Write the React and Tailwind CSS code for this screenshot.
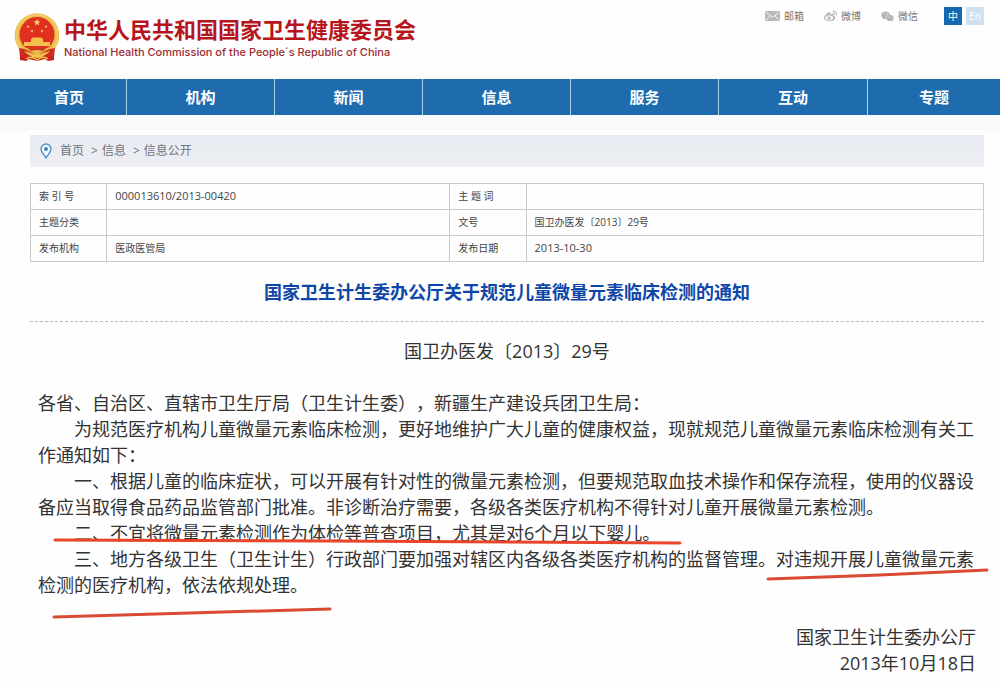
import { FaWeibo, FaWeixin } from "react-icons/fa";

const NAV_ITEMS = ["首页", "机构", "新闻", "信息", "服务", "互动", "专题"];

const CRUMBS = ["首页", "信息", "信息公开"];

const META_ROWS = [
  [
    { label: "索 引 号", value: "000013610/2013-00420", numeric: true },
    { label: "主 题 词", value: "" },
  ],
  [
    { label: "主题分类", value: "" },
    { label: "文号", value: "国卫办医发〔2013〕29号" },
  ],
  [
    { label: "发布机构", value: "医政医管局" },
    { label: "发布日期", value: "2013-10-30", numeric: true },
  ],
];

const PARAGRAPHS = [
  "为规范医疗机构儿童微量元素临床检测，更好地维护广大儿童的健康权益，现就规范儿童微量元素临床检测有关工作通知如下：",
  "一、根据儿童的临床症状，可以开展有针对性的微量元素检测，但要规范取血技术操作和保存流程，使用的仪器设备应当取得食品药品监管部门批准。非诊断治疗需要，各级各类医疗机构不得针对儿童开展微量元素检测。",
  "二、不宜将微量元素检测作为体检等普查项目，尤其是对6个月以下婴儿。",
  "三、地方各级卫生（卫生计生）行政部门要加强对辖区内各级各类医疗机构的监督管理。对违规开展儿童微量元素检测的医疗机构，依法依规处理。",
];

const STAR =
  "M0 -5 L1.2 -1.6 L4.8 -1.5 L1.9 0.6 L2.9 4 L0 2 L-2.9 4 L-1.9 0.6 L-4.8 -1.5 L-1.2 -1.6 Z";

function Emblem() {
  return (
    <svg viewBox="0 0 46 50" className="h-[50px] w-[46px] shrink-0" aria-hidden="true">
      <path d="M6 34 L6 47 L12 48 L15 46 L23 48 L31 46 L34 48 L40 47 L40 34 Z" fill="#c8201c" />
      <circle cx="23" cy="22.5" r="22.3" fill="#ecbc4c" />
      <circle cx="23" cy="22.5" r="20.5" fill="none" stroke="#f3cf6c" strokeWidth="1.5" />
      <circle cx="23" cy="21.5" r="17.5" fill="#e0301f" />
      <path d={STAR} transform="translate(23 9.5) scale(0.75)" fill="#f6d66b" />
      <path d={STAR} transform="translate(14 13.5) scale(0.35)" fill="#f6d66b" />
      <path d={STAR} transform="translate(18 18) scale(0.35)" fill="#f6d66b" />
      <path d={STAR} transform="translate(28 18) scale(0.35)" fill="#f6d66b" />
      <path d={STAR} transform="translate(32 13.5) scale(0.35)" fill="#f6d66b" />
      <path d="M17 26 L19 24.5 H27 L29 26 V29 H36 V33 H10 V29 H17 Z" fill="#f3c04c" />
      <path d="M7 33 Q23 40 39 33 L36 38 Q23 44 10 38 Z" fill="#e9b646" />
      <path d="M14 35 Q19 34 23 36 Q27 34 32 35 L29 38 Q23 36 17 38 Z" fill="#cf3a1e" />
      <path d="M5 35 Q13 36 20 41 L15 46 Q10 43 6 44 Z" fill="#cf2a1e" />
      <path d="M41 35 Q33 36 26 41 L31 46 Q36 43 40 44 Z" fill="#cf2a1e" />
      <path d="M10 38 Q17 39 23 43 Q29 39 36 38 Q32 43 23 45 Q14 43 10 38 Z" fill="#f0bf4a" />
      <path d="M12 46 Q17 42 23 47 Q29 42 34 46" fill="none" stroke="#efbd48" strokeWidth="1.5" />
    </svg>
  );
}

function MailIcon() {
  return (
    <svg viewBox="0 0 15 10" className="h-[10px] w-[15px]" aria-hidden="true">
      <rect width="15" height="10" rx="1" fill="#b9b9b9" />
      <path d="M1 1.5 L7.5 6 L14 1.5 M1 9 L5 5 M14 9 L10 5" fill="none" stroke="#fff" strokeWidth="0.9" />
    </svg>
  );
}

function PinIcon() {
  return (
    <svg viewBox="0 0 12 16" className="h-4 w-3" aria-hidden="true">
      <path
        d="M6 15 C4.5 12 1 9.5 1 6 A5 5 0 0 1 11 6 C11 9.5 7.5 12 6 15 Z"
        fill="#f5f9fd"
        stroke="#4a94c8"
        strokeWidth="1.4"
      />
      <circle cx="6" cy="6" r="1.9" fill="#2b7dbb" />
    </svg>
  );
}

function Header() {
  return (
    <header className="flex items-start justify-between pr-4 pl-[14px]">
      <a href="#" className="flex items-start gap-1 pt-[13px] pb-4">
        <Emblem />
        <span className="pt-1">
          <span className="block text-[22px] leading-6 font-bold text-[#b5151b]">
            中华人民共和国国家卫生健康委员会
          </span>
          <span className="mt-1 block font-[Inter,sans-serif] text-[11px] leading-[14px] font-medium text-[#9c2b35]">
            National Health Commission of the People´s Republic of China
          </span>
        </span>
      </a>
      <div className="flex items-center pt-[7px] text-[10px] leading-[18px] text-[#777]">
        <a href="#" className="mr-5 flex items-center gap-1">
          <MailIcon />
          邮箱
        </a>
        <a href="#" className="mr-5 flex items-center gap-1">
          <FaWeibo className="h-[13px] w-[13px] text-[#b9b9b9]" />
          微博
        </a>
        <a href="#" className="mr-[26px] flex items-center gap-1">
          <FaWeixin className="h-[13px] w-[13px] text-[#b3b3b3]" />
          微信
        </a>
        <button type="button" className="mr-1 h-[18px] w-[18px] bg-[#1469b0] text-center text-white">
          中
        </button>
        <button type="button" className="h-[18px] w-[18px] bg-[#cfe0f0] text-center text-white">
          En
        </button>
      </div>
    </header>
  );
}

function NavBar() {
  return (
    <nav className="grid grid-cols-[127fr_148fr_148fr_148fr_148fr_149fr_132fr] bg-[#1e6cae] text-[15px] font-bold text-white">
      {NAV_ITEMS.map((item) => (
        <a
          key={item}
          href="#"
          className="border-r border-[#a9d3e8] text-center leading-9 first:pl-3 last:border-r-0"
        >
          {item}
        </a>
      ))}
    </nav>
  );
}

function Breadcrumb() {
  return (
    <div className="flex h-8 items-center bg-linear-to-b from-[#e9ecf2] to-[#eceef3] pl-[10px] text-[12px] text-[#6f747b]">
      <PinIcon />
      <ol className="ml-2 flex">
        {CRUMBS.map((crumb, i) => (
          <li key={crumb} className="flex">
            {i > 0 && <span className="mr-1 ml-[7px]">&gt;</span>}
            <a href="#">{crumb}</a>
          </li>
        ))}
      </ol>
    </div>
  );
}

function MetaTable() {
  return (
    <table className="mt-4 w-full table-fixed border-collapse text-left text-[10px] text-[#444]">
      <colgroup>
        <col className="w-[8%]" />
        <col className="w-[36%]" />
        <col className="w-[8%]" />
        <col />
      </colgroup>
      <tbody>
        {META_ROWS.map((row) => (
          <tr key={row[0].label} className="h-[26px]">
            {row.map((cell) => [
              <th key={cell.label} scope="row" className="border border-[#c8cbc8] px-2 font-normal">
                {cell.label}
              </th>,
              <td
                key={`${cell.label}-value`}
                className={`border border-[#c8cbc8] px-2 ${cell.numeric ? "text-[11px]" : ""}`}
              >
                {cell.value}
              </td>,
            ])}
          </tr>
        ))}
      </tbody>
    </table>
  );
}

// Hand-drawn red marks over the key sentences
function Underlines() {
  return (
    <svg
      viewBox="0 0 954 286"
      preserveAspectRatio="none"
      className="pointer-events-none absolute inset-0 h-full w-full overflow-visible"
      aria-hidden="true"
    >
      <g fill="none" strokeWidth="3" strokeLinecap="round">
        <path d="M25 150 L300 151 L650 153" stroke="#e8452a" />
        <path d="M738 189 L850 185 L957 180" stroke="#d94a35" />
        <path d="M24 227 L160 223 L300 219" stroke="#d94a35" />
      </g>
    </svg>
  );
}

export default function App() {
  return (
    <div
      lang="zh-CN"
      className="min-h-screen bg-[#fefefe] font-['Open_Sans','Noto_Sans_CJK_SC',sans-serif] text-[#333] [text-spacing-trim:space-all]"
    >
      <Header />
      <NavBar />
      <div className="h-4 bg-[#f9fafb]" />
      <main className="pt-1 pr-4 pl-[30px]">
        <Breadcrumb />
        <MetaTable />
        <h1 className="border-b border-dashed border-[#bbb] pt-4 pb-[15px] text-center text-[18px] leading-7 font-bold text-[#0f47a8]">
          国家卫生计生委办公厅关于规范儿童微量元素临床检测的通知
        </h1>
        <article className="text-[18px] leading-[26px]">
          <p className="mt-4 mb-[26px] text-center">国卫办医发〔2013〕29号</p>
          <div className="relative px-2">
            <p>各省、自治区、直辖市卫生厅局（卫生计生委），新疆生产建设兵团卫生局：</p>
            {PARAGRAPHS.map((text) => (
              <p key={text} className="indent-9">
                {text}
              </p>
            ))}
            <div className="mt-[26px] text-right">
              <p>国家卫生计生委办公厅</p>
              <p>2013年10月18日</p>
            </div>
            <Underlines />
          </div>
        </article>
      </main>
    </div>
  );
}
